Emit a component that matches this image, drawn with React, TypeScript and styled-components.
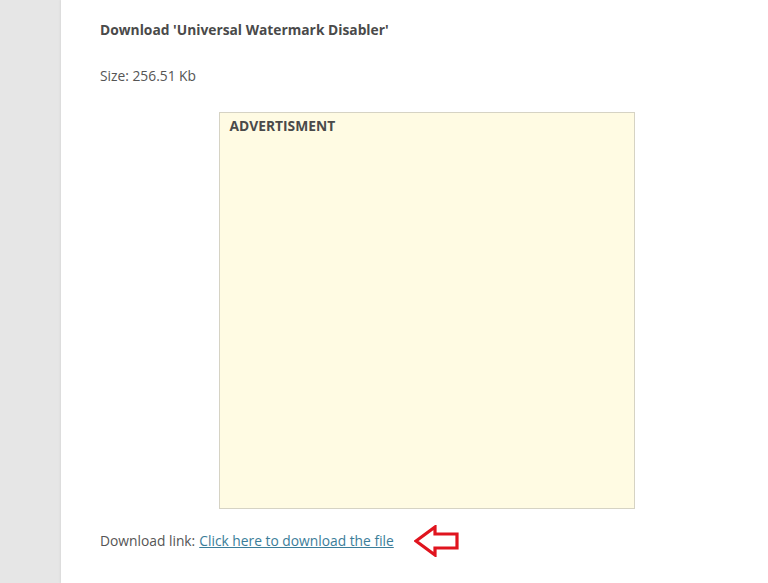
import styled, { createGlobalStyle } from 'styled-components';

const Global = createGlobalStyle`
  html, body {
    margin: 0;
    padding: 0;
    background: #e6e6e6;
  }
  body {
    font-family: "Open Sans", "Liberation Sans", sans-serif;
  }
`;

const Page = styled.div`
  display: flex;
  min-height: 583px;
`;

const Sidebar = styled.div`
  width: 61px;
  flex-shrink: 0;
  background: #e6e6e6;
`;

const Main = styled.div`
  flex: 1;
  background: #fff;
  box-shadow: -1px 0 2px rgba(0, 0, 0, 0.06);
  padding: 19px 15px 0 39px;
  color: #555;
  font-size: 13.8px;
`;

const Title = styled.h3`
  margin: 0;
  font-size: 13.8px;
  font-weight: 700;
  line-height: 21px;
  color: #4a4a4a;
`;

const Size = styled.p`
  margin: 25px 0 0;
  line-height: 21px;
`;

const AdBox = styled.div`
  width: 394px;
  height: 387px;
  margin: 26px auto 0;
  background: #fffbe3;
  border: 1px solid #d6d3c4;
  padding: 4px 10px;
`;

const AdLabel = styled.div`
  font-size: 13.8px;
  font-weight: 700;
  color: #4a4a4a;
  line-height: 18px;
`;

const LinkRow = styled.div`
  display: flex;
  align-items: center;
  margin-top: 14px;
  line-height: 21px;
`;

const Link = styled.a`
  color: #3b7d99;
  text-decoration: underline;
  margin-left: 4px;
`;

const Arrow = styled.svg`
  margin-left: 20px;
  margin-top: 2px;
`;

const App = () => (
  <>
    <Global />
    <Page>
      <Sidebar />
      <Main>
        <Title>Download 'Universal Watermark Disabler'</Title>
        <Size>Size: 256.51 Kb</Size>
        <AdBox>
          <AdLabel>ADVERTISMENT</AdLabel>
        </AdBox>
        <LinkRow>
          <span>Download link:</span>
          <Link href="#">Click here to download the file</Link>
          <Arrow width="46" height="32" viewBox="0 0 46 32">
            <path
              d="M2 16 L21 2 L21 9 L43 9 L43 23 L21 23 L21 30 Z"
              fill="none"
              stroke="#e0141e"
              strokeWidth="3.2"
              strokeLinejoin="miter"
            />
          </Arrow>
        </LinkRow>
      </Main>
    </Page>
  </>
);

export default App;
